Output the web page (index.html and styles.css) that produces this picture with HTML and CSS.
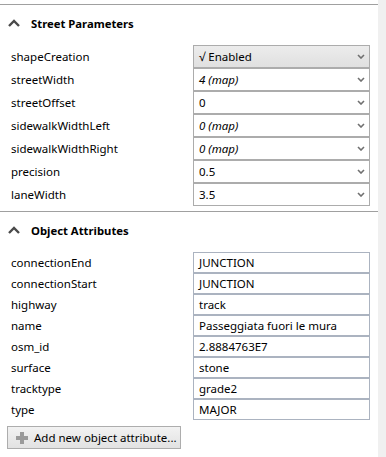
FILE: index.html
```html
<!DOCTYPE html>
<html lang="en">
  <head>
    <meta charset="UTF-8" />
    <title>Inspector</title>
    <link rel="stylesheet" href="styles.css">
  </head>
  <body>
    <div class="wrap">
      <div class="panel">
        <section class="group">
          <div class="group-head">
            <svg class="fold" width="12" height="8" viewBox="0 0 12 8"><polyline points="1,7 6,2 11,7" /></svg>
            <span>Street Parameters</span>
          </div>
          <div class="props">
            <div class="row"><span class="name">shapeCreation</span><div class="combo combo-on"><span>√ Enabled</span><svg class="drop" width="8" height="5" viewBox="0 0 8 5"><polyline points="1,1 4,4 7,1" /></svg></div></div>
            <div class="row"><span class="name">streetWidth</span><div class="combo"><span class="map">4 (map)</span><svg class="drop" width="8" height="5" viewBox="0 0 8 5"><polyline points="1,1 4,4 7,1" /></svg></div></div>
            <div class="row"><span class="name">streetOffset</span><div class="combo"><span>0</span><svg class="drop" width="8" height="5" viewBox="0 0 8 5"><polyline points="1,1 4,4 7,1" /></svg></div></div>
            <div class="row"><span class="name">sidewalkWidthLeft</span><div class="combo"><span class="map">0 (map)</span><svg class="drop" width="8" height="5" viewBox="0 0 8 5"><polyline points="1,1 4,4 7,1" /></svg></div></div>
            <div class="row"><span class="name">sidewalkWidthRight</span><div class="combo"><span class="map">0 (map)</span><svg class="drop" width="8" height="5" viewBox="0 0 8 5"><polyline points="1,1 4,4 7,1" /></svg></div></div>
            <div class="row"><span class="name">precision</span><div class="combo"><span>0.5</span><svg class="drop" width="8" height="5" viewBox="0 0 8 5"><polyline points="1,1 4,4 7,1" /></svg></div></div>
            <div class="row"><span class="name">laneWidth</span><div class="combo"><span>3.5</span><svg class="drop" width="8" height="5" viewBox="0 0 8 5"><polyline points="1,1 4,4 7,1" /></svg></div></div>
          </div>
        </section>

        <section class="group">
          <div class="group-head">
            <svg class="fold" width="12" height="8" viewBox="0 0 12 8"><polyline points="1,7 6,2 11,7" /></svg>
            <span>Object Attributes</span>
          </div>
          <div class="attrs">
            <div class="row"><span class="name">connectionEnd</span><div class="field">JUNCTION</div></div>
            <div class="row"><span class="name">connectionStart</span><div class="field">JUNCTION</div></div>
            <div class="row"><span class="name">highway</span><div class="field">track</div></div>
            <div class="row"><span class="name">name</span><div class="field">Passeggiata fuori le mura</div></div>
            <div class="row"><span class="name">osm_id</span><div class="field">2.8884763E7</div></div>
            <div class="row"><span class="name">surface</span><div class="field">stone</div></div>
            <div class="row"><span class="name">tracktype</span><div class="field">grade2</div></div>
            <div class="row"><span class="name">type</span><div class="field">MAJOR</div></div>
          </div>
          <button class="add-btn">
            <svg class="plus" width="12" height="12" viewBox="0 0 12 12">
              <rect x="4" y="0" width="4" height="12" />
              <rect x="0" y="4" width="12" height="4" />
            </svg>
            Add new object attribute...
          </button>
        </section>
      </div>
      <div class="scroll"></div>
    </div>
  </body>
</html>
```

FILE: styles.css
```css
body {
  margin: 0;
  background-color: #ffffff;
  color: #000000;
  font-family: "Noto Sans", "Open Sans", sans-serif;
  font-size: 11.5px;
}

.wrap {
  display: flex;
  width: 386px;
  height: 457px;
  overflow: hidden;
}

.panel {
  width: 378px;
  padding-top: 4px;
}

.scroll {
  width: 8px;
  background-color: #f0f0f0;
}

.group {
  border-top: 1px solid #a0a0a0;
  padding-bottom: 5px;
}

.group-head {
  display: flex;
  align-items: center;
  height: 36px;
  margin-bottom: 4px;
  padding-left: 8px;
  font-weight: bold;
  font-size: 11.3px;
}

.fold {
  margin-right: 11px;
  fill: none;
  stroke: #4a4a4a;
  stroke-width: 2.4;
}

.row {
  display: grid;
  grid-template-columns: 182px 177px;
  padding-left: 11px;
  align-items: center;
}

.name {
  line-height: 16px;
}

.combo {
  display: flex;
  align-items: center;
  justify-content: space-between;
  height: 21px;
  padding: 0 4px 0 5px;
  border: 1px solid #acacac;
  background-color: #ffffff;
}

.combo-on {
  background: linear-gradient(#ececec, #e0e0e0);
}

.map {
  font-style: italic;
}

.drop {
  fill: none;
  stroke: #707070;
  stroke-width: 1.6;
}

.field {
  height: 19px;
  line-height: 19px;
  padding-left: 5px;
  border: 1px solid #abb3c0;
  white-space: nowrap;
}

.add-btn {
  display: flex;
  align-items: center;
  height: 23px;
  margin: 6px 0 0 7px;
  padding: 0 3px 0 8px;
  border: 1px solid #adadad;
  background: linear-gradient(#f2f2f2, #e2e2e2);
  font-family: inherit;
  font-size: 11.5px;
  color: #000000;
}

.plus {
  margin-right: 6px;
  fill: #9a9a9a;
}
```
